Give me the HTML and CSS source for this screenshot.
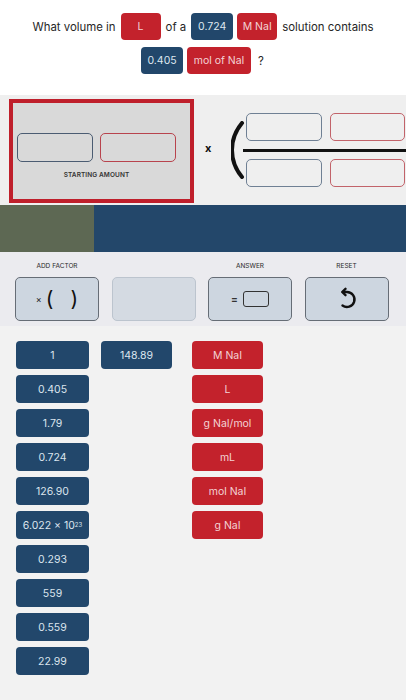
FILE: index.html
```html
<!DOCTYPE html>
<html>
<head>
<meta charset="utf-8">
<link rel="stylesheet" href="styles.css">
</head>
<body>
<div class="question">
  <div class="qline">
    <span class="qt">What volume in</span>
    <span class="chip red w40">L</span>
    <span class="qt">of a</span>
    <span class="chip blue w42">0.724</span>
    <span class="chip red w40">M NaI</span>
    <span class="qt">solution contains</span>
  </div>
  <div class="qline">
    <span class="chip blue w42">0.405</span>
    <span class="chip red w64">mol of NaI</span>
    <span class="qt q">?</span>
  </div>
</div>

<div class="work">
  <div class="start">
    <div class="start-inner">
      <div class="pair">
        <div class="slot sblue"></div>
        <div class="slot sred"></div>
      </div>
      <div class="start-label">STARTING AMOUNT</div>
    </div>
  </div>
  <div class="times">x</div>
  <svg class="paren" width="14" height="58" viewBox="0 0 14 58">
    <path d="M11 2 Q1 14 1 29 Q1 44 11 56" fill="none" stroke="#111" stroke-width="4" stroke-linecap="round"/>
  </svg>
  <div class="fraction">
    <div class="frow">
      <div class="slot fblue"></div>
      <div class="slot fred"></div>
    </div>
    <div class="fline"></div>
    <div class="frow">
      <div class="slot fblue"></div>
      <div class="slot fred"></div>
    </div>
  </div>
</div>

<div class="bar">
  <div class="bar-olive"></div>
  <div class="bar-navy"></div>
</div>

<div class="controls">
  <div class="clabel">ADD FACTOR</div>
  <div class="clabel"></div>
  <div class="clabel">ANSWER</div>
  <div class="clabel">RESET</div>
  <div class="cbtn">
    <span class="mini-x">×</span><span class="bigparen">(</span><span class="bigparen rp">)</span>
  </div>
  <div class="cbtn empty"></div>
  <div class="cbtn">
    <span class="mini-eq">=</span><span class="ansbox"></span>
  </div>
  <div class="cbtn">
    <svg width="26" height="26" viewBox="0 0 26 26">
      <path d="M9 6 H13 A7.5 7.5 0 1 1 8.5 19.5" fill="none" stroke="#111" stroke-width="2.4" stroke-linecap="round"/>
      <path d="M11.5 2.8 L8.2 6 L11.5 9.2" fill="none" stroke="#111" stroke-width="2.4" stroke-linecap="round" stroke-linejoin="round"/>
    </svg>
  </div>
</div>

<div class="tiles">
  <div class="col c1">
    <div class="tile blue">1</div>
    <div class="tile blue">0.405</div>
    <div class="tile blue">1.79</div>
    <div class="tile blue">0.724</div>
    <div class="tile blue">126.90</div>
    <div class="tile blue">6.022 × 10<sup>23</sup></div>
    <div class="tile blue">0.293</div>
    <div class="tile blue">559</div>
    <div class="tile blue">0.559</div>
    <div class="tile blue">22.99</div>
  </div>
  <div class="col c2">
    <div class="tile blue">148.89</div>
  </div>
  <div class="col c3">
    <div class="tile red">M NaI</div>
    <div class="tile red">L</div>
    <div class="tile red">g NaI/mol</div>
    <div class="tile red">mL</div>
    <div class="tile red">mol NaI</div>
    <div class="tile red">g NaI</div>
  </div>
</div>
</body>
</html>
```

FILE: styles.css
```css
* { box-sizing: border-box; }
html, body { margin: 0; padding: 0; }
body {
  width: 406px;
  height: 700px;
  overflow: hidden;
  background: #f2f2f2;
  font-family: Inter, "Liberation Sans", sans-serif;
  color: #222;
}

.question {
  background: #ffffff;
  height: 95px;
  padding-top: 13px;
}
.qline {
  display: flex;
  justify-content: center;
  align-items: center;
  gap: 4px;
  height: 27px;
  margin-bottom: 7px;
}
.qline:last-child { margin-left: 0; }
.qt {
  font-size: 11.4px;
  color: #262626;
  padding: 0 1px;
}
.q { padding-left: 3px; }
.chip {
  height: 27px;
  border-radius: 4px;
  display: flex;
  align-items: center;
  justify-content: center;
  font-size: 10.5px;
}
.chip.red { background: #c3222c; color: #f3d3d5; }
.chip.blue { background: #22476b; color: #dfe7f0; }
.w40 { width: 40px; }
.w42 { width: 42px; }
.w64 { width: 64px; }

.work {
  background: #efefef;
  height: 110px;
  display: flex;
  align-items: center;
  padding-left: 9px;
  overflow: hidden;
}
.start {
  flex: none;
  width: 185px;
  height: 104px;
  margin-top: 1px;
  border: 4px solid #bf1f2b;
  background: #d9d9d9;
  padding: 30px 0 0 4px;
}
.start-inner {
  display: inline-flex;
  flex-direction: column;
  align-items: center;
}
.pair { display: flex; gap: 7px; }
.slot {
  width: 76px;
  height: 29px;
  border-radius: 5px;
  border: 1px solid #4f6076;
}
.sblue { border-color: #4b5c72; }
.sred { border-color: #b8434d; }
.start-label {
  margin-top: 9px;
  font-size: 6.5px;
  font-weight: 600;
  letter-spacing: 0.1px;
  color: #333;
}
.times {
  flex: none;
  margin-left: 11px;
  font-size: 11px;
  font-weight: 700;
  color: #111;
  margin-top: -5px;
}
.paren {
  flex: none;
  margin-left: 20px;
}
.fraction {
  flex: none;
  width: 175px;
  margin-left: -2px;
}
.frow {
  display: flex;
  gap: 8px;
  padding-left: 3px;
}
.frow .slot { height: 28px; }
.fblue { border-color: #6f8094; width: 76px; }
.fred { border-color: #c2636a; width: 75px; }
.fline {
  height: 3px;
  background: #111;
  margin: 8px 0 7px;
  width: 200px;
}

.bar {
  display: flex;
  height: 47px;
}
.bar-olive { width: 94px; background: #5d6853; }
.bar-navy { flex: 1; background: #23476a; }

.controls {
  background: #ebebef;
  height: 74px;
  padding: 10px 15px 0;
  display: grid;
  grid-template-columns: repeat(4, 84px);
  grid-template-rows: 8px 44px;
  column-gap: 12.5px;
  row-gap: 7px;
}
.clabel {
  font-size: 6.5px;
  color: #2a2a2a;
  text-align: center;
  line-height: 8px;
}
.cbtn {
  background: #cdd6e0;
  border: 1px solid #666d76;
  border-radius: 5px;
  display: flex;
  align-items: center;
  justify-content: center;
}
.cbtn.empty {
  background: #d4dae2;
  border-color: #bcc4ce;
}
.mini-x {
  font-size: 9px;
  color: #222;
  margin-right: 4px;
  margin-top: 1px;
}
.bigparen {
  font-size: 21px;
  color: #111;
  line-height: 1;
  margin-top: -2px;
}
.bigparen.rp { margin-left: 17px; }
.mini-eq {
  font-size: 10px;
  font-weight: 700;
  color: #333;
  margin-right: 5px;
}
.ansbox {
  width: 26px;
  height: 16px;
  border: 1.5px solid #333;
  border-radius: 3px;
}

.tiles {
  display: flex;
  align-items: flex-start;
  padding: 15px 0 0 16px;
  gap: 12px;
}
.col { display: flex; flex-direction: column; gap: 6px; }
.c1 { width: 73px; }
.c2 { width: 71px; }
.c3 { width: 71px; margin-left: 8px; }
.tile {
  height: 28px;
  border-radius: 4px;
  display: flex;
  align-items: center;
  justify-content: center;
  font-size: 10.5px;
}
.tile.blue { background: #22476b; color: #dce5ee; }
.tile.red { background: #c3222c; color: #f3d3d5; }
.tile sup { font-size: 6px; vertical-align: 5px; line-height: 0; }
```
